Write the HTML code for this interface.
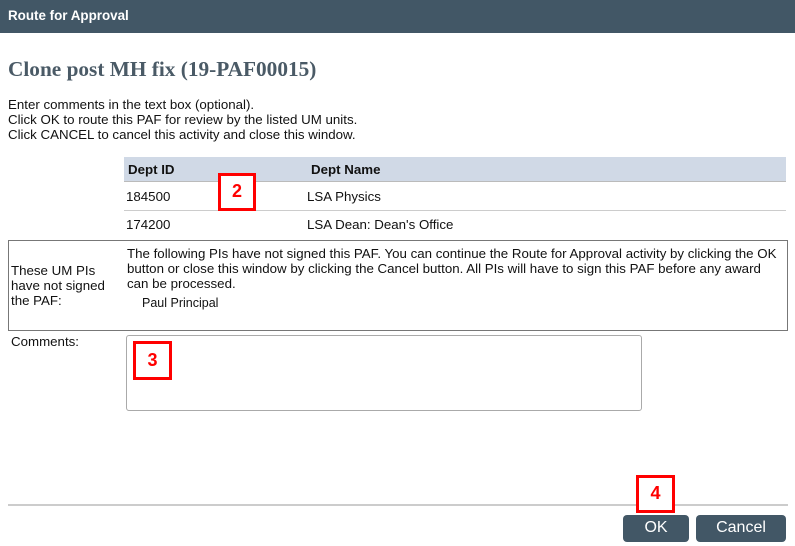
<!DOCTYPE html>
<html><head><style>
*{margin:0;padding:0;box-sizing:border-box}
body{width:795px;height:546px;position:relative;background:#fff;font-family:"Liberation Sans",Arial,sans-serif;color:#111;overflow:hidden}
.a{position:absolute;white-space:nowrap}
.hdr{left:0;top:0;width:795px;height:33px;background:#425766;color:#fff;font-weight:bold;font-size:13.4px;padding:8px 0 0 8px}
.t{left:8px;top:57px;font-family:"Liberation Serif",serif;font-weight:bold;font-size:21.3px;color:#4a5a66}
.s{font-size:13.3px;line-height:15px}
.red{border:3px solid #f00;color:#f00;font-weight:bold;font-size:18px;text-align:center;background:#fff}
.btn{background:#425766;color:#fff;font-size:16px;text-align:center;border-radius:4px;line-height:26px}
</style></head><body>
<div class="a hdr">Route for Approval</div>
<div class="a t">Clone post MH fix (19-PAF00015)</div>
<div class="a s" style="left:8px;top:97px">Enter comments in the text box (optional).<br>Click OK to route this PAF for review by the listed UM units.<br>Click CANCEL to cancel this activity and close this window.</div>
<div class="a" style="left:124px;top:157px;width:662px;height:25px;background:#d0d9e6;border-bottom:1px solid #bbb"></div>
<div class="a s" style="left:128px;top:162px;font-weight:bold">Dept ID</div>
<div class="a s" style="left:311px;top:162px;font-weight:bold">Dept Name</div>
<div class="a s" style="left:126px;top:189px">184500</div>
<div class="a s" style="left:307px;top:189px">LSA Physics</div>
<div class="a" style="left:124px;top:210px;width:662px;height:1px;background:#ccc"></div>
<div class="a s" style="left:126px;top:217px">174200</div>
<div class="a s" style="left:307px;top:217px">LSA Dean: Dean's Office</div>
<div class="a red" style="left:218px;top:173px;width:38px;height:38px;line-height:31px">2</div>
<div class="a" style="left:8px;top:240px;width:780px;height:91px;border:1px solid #777"></div>
<div class="a s" style="left:11px;top:263px">These UM PIs<br>have not signed<br>the PAF:</div>
<div class="a s" style="left:127px;top:246px">The following PIs have not signed this PAF. You can continue the Route for Approval activity by clicking the OK<br>button or close this window by clicking the Cancel button. All PIs will have to sign this PAF before any award<br>can be processed.</div>
<div class="a" style="left:142px;top:296px;font-size:12.5px">Paul Principal</div>
<div class="a s" style="left:11px;top:334px">Comments:</div>
<div class="a" style="left:126px;top:335px;width:516px;height:76px;border:1px solid #aaa;border-radius:3px"></div>
<div class="a red" style="left:133px;top:341px;width:39px;height:39px;line-height:32px">3</div>
<div class="a" style="left:8px;top:504px;width:780px;height:2px;background:#ccc"></div>
<div class="a btn" style="left:623px;top:515px;width:66px;height:27px">OK</div>
<div class="a btn" style="left:696px;top:515px;width:90px;height:27px">Cancel</div>
<div class="a red" style="left:636px;top:475px;width:39px;height:38px;line-height:31px">4</div>
</body></html>
